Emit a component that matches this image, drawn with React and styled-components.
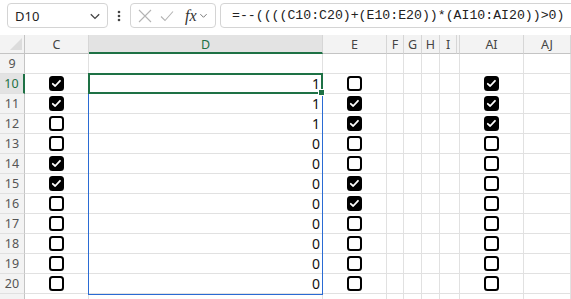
import styled, { createGlobalStyle } from 'styled-components';

const GREEN = '#1e7145';

const Global = createGlobalStyle`
  body {
    margin: 0;
    background: #fff;
    font-family: "Noto Sans", "Open Sans", sans-serif;
    overflow: hidden;
  }
`;

// hidden = the sliver that marks hidden columns J..AH
const columns = [
  { key: 'C', label: 'C', width: '64px', box: true },
  { key: 'D', label: 'D', width: '234px', value: true },
  { key: 'E', label: 'E', width: '64px', box: true },
  { key: 'F', label: 'F', width: '17px' },
  { key: 'G', label: 'G', width: '18px' },
  { key: 'H', label: 'H', width: '18px' },
  { key: 'I', label: 'I', width: '17px', merge: true },
  { key: 'gap', label: '', width: '3px', hidden: true },
  { key: 'AI', label: 'AI', width: '64px', box: true },
  { key: 'AJ', label: 'AJ', width: '1fr' },
];

const rows = [
  { n: 9 },
  { n: 10, C: true, D: 1, E: false, AI: true },
  { n: 11, C: true, D: 1, E: true, AI: true },
  { n: 12, C: false, D: 1, E: true, AI: true },
  { n: 13, C: false, D: 0, E: false, AI: false },
  { n: 14, C: true, D: 0, E: false, AI: false },
  { n: 15, C: true, D: 0, E: true, AI: false },
  { n: 16, C: false, D: 0, E: true, AI: false },
  { n: 17, C: false, D: 0, E: false, AI: false },
  { n: 18, C: false, D: 0, E: false, AI: false },
  { n: 19, C: false, D: 0, E: false, AI: false },
  { n: 20, C: false, D: 0, E: false, AI: false },
  { n: 21, partial: true },
];

const Chevron = ({ size = 10, color = '#444' }) => (
  <svg width={size} height={size} viewBox="0 0 10 10">
    <path d="M1.5 3.5 L5 7 L8.5 3.5" fill="none" stroke={color} strokeWidth="1.1" />
  </svg>
);

const CheckBox = ({ checked }) => (
  <svg width="15" height="15" viewBox="0 0 15 15">
    <rect
      x="1"
      y="1"
      width="13"
      height="13"
      rx="2.5"
      fill={checked ? '#000' : '#fff'}
      stroke="#000"
      strokeWidth="2"
    />
    {checked && (
      <path d="M3.8 7.8 L6.2 10 L11 4.8" fill="none" stroke="#fff" strokeWidth="1.8" strokeLinecap="round" strokeLinejoin="round" />
    )}
  </svg>
);

const App = () => {
  const template = ['25px', ...columns.map((c) => c.width)].join(' ');

  return (
    <Page>
      <Global />
      <Toolbar>
        <NameBox>
          <span>D10</span>
          <Chevron size={12} />
        </NameBox>
        <Dots>
          <svg width="4" height="12" viewBox="0 0 4 12">
            <circle cx="2" cy="2" r="1.3" fill="#444" />
            <circle cx="2" cy="6" r="1.3" fill="#444" />
            <circle cx="2" cy="10" r="1.3" fill="#444" />
          </svg>
        </Dots>
        <FxBox>
          <svg width="14" height="14" viewBox="0 0 14 14">
            <path d="M1 1 L13 13 M13 1 L1 13" stroke="#b4b4b4" strokeWidth="1.1" />
          </svg>
          <svg width="14" height="14" viewBox="0 0 14 14">
            <path d="M1 7.5 L5 11.5 L13 2.5" fill="none" stroke="#b4b4b4" strokeWidth="1.1" />
          </svg>
          <Fx>fx</Fx>
          <Chevron size={9} color="#777" />
        </FxBox>
        <FormulaBox>=--((((C10:C20)+(E10:E20))*(AI10:AI20))&gt;0)</FormulaBox>
      </Toolbar>

      <Sheet style={{ gridTemplateColumns: template }}>
        <Corner>
          <svg width="12" height="12" viewBox="0 0 12 12">
            <path d="M12 0 L12 12 L0 12 Z" fill="#dcdcdc" />
          </svg>
        </Corner>
        {columns.map((c) => (
          <ColHeader key={c.key} $selected={c.key === 'D'} $hidden={c.hidden}>
            {c.label}
          </ColHeader>
        ))}

        {rows.map((r) => (
          <Row key={r.n} r={r} />
        ))}

        <SpillRange />
      </Sheet>
    </Page>
  );
};

const Row = ({ r }) => (
  <>
    <RowHeader $selected={r.n === 10}>{r.partial ? '' : r.n}</RowHeader>
    {columns.map((c) => {
      const v = r[c.key];
      const active = r.n === 10 && c.key === 'D';
      return (
        <Cell key={c.key} $merge={c.merge} $active={active}>
          {c.box && v !== undefined && <CheckBox checked={v} />}
          {c.value && v !== undefined && <Num>{v}</Num>}
          {active && <Handle />}
        </Cell>
      );
    })}
  </>
);

const Page = styled.div`
  width: 571px;
  height: 299px;
  overflow: hidden;
`;

const Toolbar = styled.div`
  height: 35px;
  display: flex;
  align-items: flex-start;
  padding: 3px 0 0 7px;
  box-sizing: border-box;
  background: #fff;
`;

const NameBox = styled.div`
  width: 101px;
  height: 25px;
  box-sizing: border-box;
  border: 1px solid #d4d4d4;
  border-radius: 4px;
  display: flex;
  align-items: center;
  justify-content: space-between;
  padding: 0 6px 0 7px;
  font-size: 13px;
  color: #222;
`;

const Dots = styled.div`
  width: 22px;
  height: 25px;
  display: flex;
  align-items: center;
  justify-content: center;
`;

const FxBox = styled.div`
  width: 86px;
  height: 25px;
  box-sizing: border-box;
  border: 1px solid #d4d4d4;
  border-radius: 4px;
  display: flex;
  align-items: center;
  gap: 8px;
  padding: 0 4px 0 7px;
`;

const Fx = styled.span`
  font-family: "Liberation Serif", serif;
  font-style: italic;
  font-size: 16px;
  color: #333;
  margin-left: 3px;
  margin-right: -6px;
`;

const FormulaBox = styled.div`
  flex: 1;
  height: 25px;
  margin-left: 4px;
  margin-right: -10px;
  box-sizing: border-box;
  border: 1px solid #d4d4d4;
  border-radius: 4px;
  display: flex;
  align-items: center;
  padding-left: 11px;
  font-family: "Liberation Mono", monospace;
  font-size: 13.2px;
  color: #222;
  white-space: nowrap;
`;

const Sheet = styled.div`
  position: relative;
  display: grid;
  grid-template-rows: 19px;
  grid-auto-rows: 20px;
`;

const Corner = styled.div`
  background: #f3f3f3;
  border-right: 1px solid #c4c4c4;
  border-bottom: 1px solid #c4c4c4;
  box-sizing: border-box;
  display: flex;
  align-items: flex-end;
  justify-content: flex-end;
  padding: 0 2px 3px 0;
`;

const ColHeader = styled.div`
  box-sizing: border-box;
  background: ${(p) => (p.$selected ? '#e3e3e3' : '#f3f3f3')};
  border-right: 1px solid #d6d6d6;
  border-bottom: ${(p) => (p.$selected ? `2px solid ${GREEN}` : '1px solid #c4c4c4')};
  color: ${(p) => (p.$selected ? GREEN : '#444')};
  font-size: 12.5px;
  display: flex;
  align-items: center;
  justify-content: center;
  padding-top: ${(p) => (p.$selected ? '1px' : '0')};
`;

const RowHeader = styled.div`
  box-sizing: border-box;
  background: ${(p) => (p.$selected ? '#e3e3e3' : '#f3f3f3')};
  border-right: ${(p) => (p.$selected ? `2px solid ${GREEN}` : '1px solid #c4c4c4')};
  border-bottom: 1px solid #e0e0e0;
  color: ${(p) => (p.$selected ? GREEN : '#555')};
  font-size: 12.5px;
  display: flex;
  align-items: center;
  justify-content: center;
`;

const Cell = styled.div`
  position: relative;
  box-sizing: border-box;
  border-right: ${(p) => (p.$merge ? 'none' : '1px solid #e1e1e1')};
  border-bottom: 1px solid #e1e1e1;
  display: flex;
  align-items: center;
  justify-content: center;

  ${(p) =>
    p.$active &&
    `
    &::after {
      content: '';
      position: absolute;
      left: -1px;
      top: -1px;
      right: -1px;
      bottom: -1px;
      border: 2px solid ${GREEN};
      z-index: 3;
      pointer-events: none;
    }
  `}
`;

const Num = styled.span`
  width: 100%;
  text-align: right;
  padding-right: 2px;
  box-sizing: border-box;
  font-family: "Noto Sans", sans-serif;
  font-size: 14px;
  color: #111;
`;

const Handle = styled.div`
  position: absolute;
  right: -3px;
  bottom: -3px;
  width: 5px;
  height: 5px;
  background: ${GREEN};
  border: 1px solid #fff;
  z-index: 4;
`;

const SpillRange = styled.div`
  position: absolute;
  left: 88px;
  top: 39px;
  width: 235px;
  height: 221px;
  box-sizing: border-box;
  border: 1px solid #2a6bd4;
  pointer-events: none;
  z-index: 2;
`;

export default App;
